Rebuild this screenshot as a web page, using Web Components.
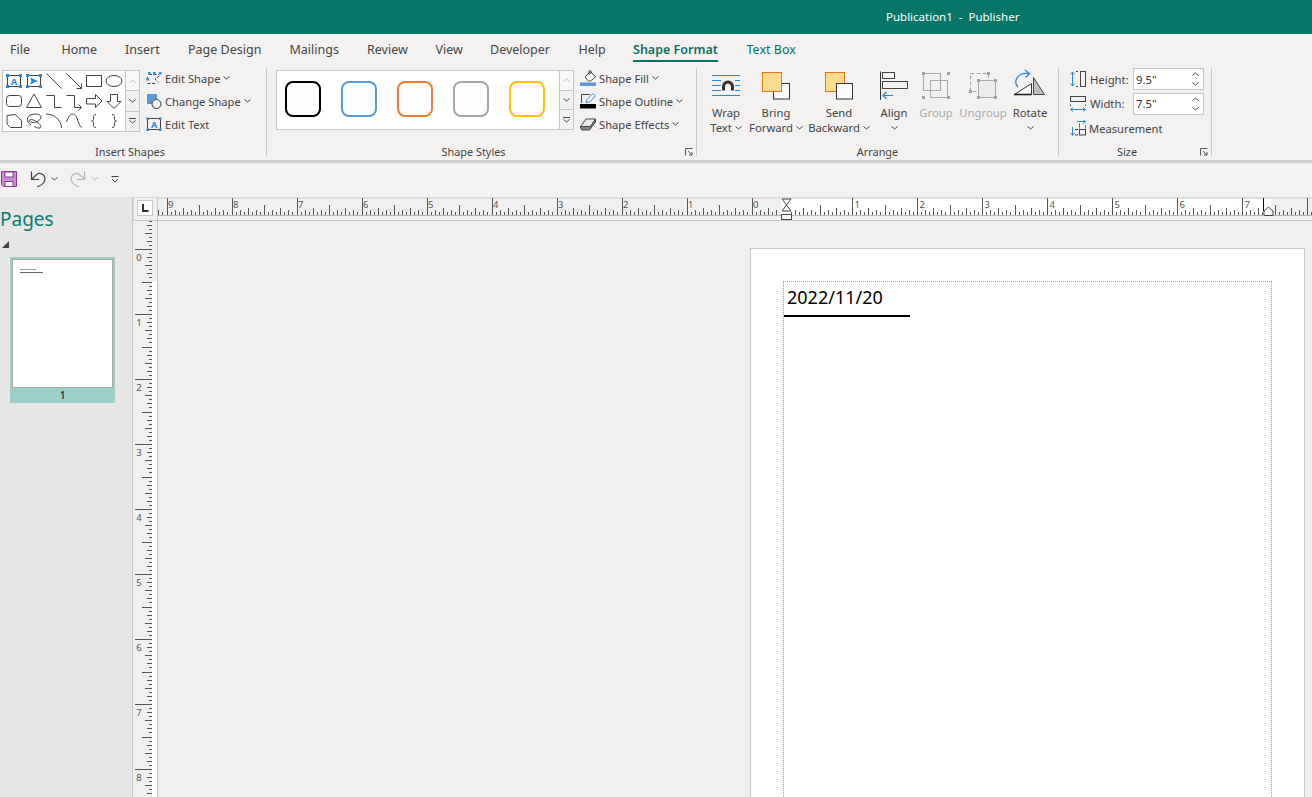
<!DOCTYPE html>
<html>
<head>
<meta charset="utf-8">
<title>Publication1 - Publisher</title>
<style>
  html, body { margin: 0; height: 100%; overflow: hidden; background: #f3f2f1; }
  body { font-family: "Noto Sans", "Open Sans", sans-serif; font-size: 11.3px; color: #444; display: flex; flex-direction: column; }
  .col { display: flex; flex-direction: column; }
</style>
</head>
<body>
<pub-titlebar>Publication1  -  Publisher</pub-titlebar>

<pub-tabs>
  <pub-tab style="width:23px">File</pub-tab>
  <pub-tab style="width:35px">Home</pub-tab>
  <pub-tab style="width:34.5px">Insert</pub-tab>
  <pub-tab style="width:73px">Page Design</pub-tab>
  <pub-tab style="width:49px">Mailings</pub-tab>
  <pub-tab style="width:40px">Review</pub-tab>
  <pub-tab style="width:26px">View</pub-tab>
  <pub-tab style="width:60px">Developer</pub-tab>
  <pub-tab style="width:26px">Help</pub-tab>
  <pub-tab style="width:85px" active contextual>Shape Format</pub-tab>
  <pub-tab style="width:49px" contextual>Text Box</pub-tab>
</pub-tabs>

<pub-ribbon>
  <rb-group label="Insert Shapes" style="width:267px;--label-right:6px">
    <rb-gallery style="margin:4px 0 0 2px;height:62px;width:138px">
      <svg width="122" height="60" viewBox="3 71 122 60" fill="none" stroke="#444" stroke-width="1">
        <rect x="7.5" y="75.5" width="13" height="11"/>
        <g fill="#2b88d8" stroke="none"><rect x="6" y="74" width="3" height="3"/><rect x="19" y="74" width="3" height="3"/><rect x="6" y="85" width="3" height="3"/><rect x="19" y="85" width="3" height="3"/></g>
        <text x="14" y="84.5" text-anchor="middle" font-family="Noto Sans" font-weight="700" font-size="9" fill="#2b88d8" stroke="none">A</text>
        <rect x="27.5" y="75.5" width="13" height="11"/>
        <g fill="#2b88d8" stroke="none"><rect x="26" y="74" width="3" height="3"/><rect x="39" y="74" width="3" height="3"/><rect x="26" y="85" width="3" height="3"/><rect x="39" y="85" width="3" height="3"/></g>
        <path d="M30 77.5 L38 81 L30 84.5 L31.5 81 Z" fill="#2b88d8" stroke="none"/>
        <path d="M46.5 73.5 L61.5 88.5"/>
        <path d="M66.5 73.5 L81.5 88.5 M81.5 83.5 V88.5 H76.5"/>
        <rect x="86.5" y="75.5" width="15" height="11"/>
        <ellipse cx="114" cy="81" rx="8" ry="5.5"/>
        <rect x="6.5" y="95.5" width="15" height="11" rx="3"/>
        <path d="M34 94 L41.5 107.5 H26.5 Z"/>
        <path d="M46.5 95.5 H54.5 V107.5 H61.5"/>
        <path d="M66.5 95.5 H74.5 V107.5 H81.5 M78.5 104.5 L81.5 107.5 L78.5 110.5"/>
        <path d="M86.5 98.5 H95.5 V94.5 L102 101 L95.5 107.5 V104 H86.5 Z"/>
        <path d="M110.5 94.5 H117.5 V101.5 H121 L114 108.5 L107 101.5 H110.5 Z"/>
        <path d="M7 115.5 L15 114.5 L21.5 120.5 V127.5 H10.5 L7 124 Z"/>
        <path d="M31 125 C26 122 26 116 32 114.5 C37 113 42 115 41 118 C39 122 32 124 29 121 C29 119 33 119 37 122 C40 124 42 127 40 128 C37 129 36 126 34 127"/>
        <path d="M46 114 C54 114 61.5 120 61.5 128"/>
        <path d="M66.5 122 C70 111 75 113 77 118 C79 124 80 127 82 127.5"/>
        <path d="M96 114.5 C93.5 114.5 93.5 116 93.5 118 V119.5 C93.5 120.5 92.5 121 91.5 121 C92.5 121 93.5 121.5 93.5 122.5 V124 C93.5 126 93.5 127.5 96 127.5"/>
        <path d="M112 114.5 C114.5 114.5 114.5 116 114.5 118 V119.5 C114.5 120.5 115.5 121 116.5 121 C115.5 121 114.5 121.5 114.5 122.5 V124 C114.5 126 114.5 127.5 112 127.5"/>
      </svg>
    </rb-gallery>
    <div class="col" style="margin:.5px 0 0 6px">
      <rb-small menu label="Edit Shape">
        <svg slot="icon" width="16" height="16" viewBox="146 70 16 16" fill="none" stroke="#444">
          <path d="M149 74.5 H159 M159.5 76 L155 79 L158.5 82 M147.5 77 V81 M147.5 83.5 H155" stroke-dasharray="3 1.5"/>
          <g fill="#2b88d8" stroke="none"><rect x="148" y="72" width="2.5" height="2.5"/><rect x="153" y="72" width="2.5" height="2.5"/><rect x="159" y="72" width="2.5" height="2.5"/><rect x="146.5" y="78" width="2.5" height="2.5"/></g>
        </svg>
      </rb-small>
      <rb-small menu label="Change Shape">
        <svg slot="icon" width="16" height="16" viewBox="146 93 16 16">
          <path d="M147 94 H157 V99 A5 5 0 0 0 152 104 H147 Z" fill="#5b9bd5"/>
          <circle cx="156.5" cy="104" r="4.5" fill="#f3f2f1" stroke="#333"/>
        </svg>
      </rb-small>
      <rb-small label="Edit Text">
        <svg slot="icon" width="16" height="16" viewBox="146 116 16 16" fill="none" stroke="#444">
          <rect x="147.5" y="118.5" width="13" height="11"/>
          <g fill="#2b88d8" stroke="none"><rect x="146.5" y="117.5" width="2.5" height="2.5"/><rect x="159" y="117.5" width="2.5" height="2.5"/><rect x="146.5" y="128.5" width="2.5" height="2.5"/><rect x="159" y="128.5" width="2.5" height="2.5"/></g>
          <text x="154" y="127.5" text-anchor="middle" font-family="Noto Sans" font-weight="700" font-size="9" fill="#2b88d8" stroke="none">A</text>
        </svg>
      </rb-small>
    </div>
  </rb-group>

  <rb-group label="Shape Styles" launcher style="width:430px">
    <rb-gallery style="margin:4px 0 0 9px;height:60px;width:298px">
      <div style="display:flex;gap:20px;padding:10px 0 0 8px">
        <style-swatch style="--c:#000"></style-swatch>
        <style-swatch style="--c:#5b9bd5"></style-swatch>
        <style-swatch style="--c:#ed7d31"></style-swatch>
        <style-swatch style="--c:#a5a5a5"></style-swatch>
        <style-swatch style="--c:#ffc000"></style-swatch>
      </div>
    </rb-gallery>
    <div class="col" style="margin:.5px 0 0 6px">
      <rb-small menu label="Shape Fill">
        <svg slot="icon" width="16" height="16" viewBox="580 70 16 16">
          <path d="M585 77 L590.5 71.5 L595.5 77 L590.5 81 H588.5 Z" fill="#fff" stroke="#444"/>
          <path d="M589 75 V71.5 A1 1 0 0 1 591 71.5 V74" fill="none" stroke="#444"/>
          <rect x="580" y="82.5" width="16" height="3.5" fill="#5b9bd5"/>
        </svg>
      </rb-small>
      <rb-small menu label="Shape Outline">
        <svg slot="icon" width="16" height="16" viewBox="580 93 16 16">
          <path d="M590 94.5 H581.5 V103" fill="none" stroke="#444"/>
          <path d="M586 102.5 L587 99.5 L593 93.5 L595.5 96 L589.5 102 Z" fill="#fff" stroke="#2b88d8"/>
          <rect x="580" y="104" width="16" height="4.5" fill="#000"/>
        </svg>
      </rb-small>
      <rb-small menu label="Shape Effects">
        <svg slot="icon" width="16" height="16" viewBox="580 116 16 16">
          <path d="M580.5 126.5 L586 119 H595.5 L590.5 126.5 Z" fill="#e8e8e8" stroke="#444"/>
          <path d="M580.5 126.5 H590.5 L595.5 119 V122 L589.5 130 H582 L580.5 128 Z" fill="#8a8a8a" stroke="#444"/>
        </svg>
      </rb-small>
    </div>
  </rb-group>

  <rb-group label="Arrange" style="width:362px">
    <div style="display:flex;margin-left:10px">
      <rb-large line1="Wrap" line2="Text" menu style="width:38px">
        <svg slot="icon" width="40" height="38" viewBox="706 68 40 38" fill="none">
          <path d="M712 75.5 H740 M712 80.5 H721 M735 80.5 H740 M712 85.5 H721 M735 85.5 H740 M712 90.5 H721 M735 90.5 H740 M712 95.5 H740" stroke="#2b88d8"/>
          <path d="M723.5 90.5 V86.5 A4.5 4.5 0 0 1 732.5 86.5 V90.5" stroke="#333" stroke-width="3"/>
        </svg>
      </rb-large>
      <rb-large line1="Bring" line2="Forward" menu style="width:62px">
        <svg slot="icon" width="40" height="38" viewBox="756 68 40 38">
          <rect x="773.5" y="83.5" width="16" height="15.5" fill="#fafafa" stroke="#333"/>
          <rect x="762.5" y="72.5" width="19" height="19" fill="#fbdc8f" stroke="#e07a10"/>
        </svg>
      </rb-large>
      <rb-large line1="Send" line2="Backward" menu style="width:64px">
        <svg slot="icon" width="40" height="38" viewBox="819 68 40 38">
          <rect x="825.5" y="72.5" width="19" height="19" fill="#fbdc8f" stroke="#e07a10"/>
          <rect x="836.5" y="83.5" width="16" height="15.5" fill="#fafafa" stroke="#333"/>
        </svg>
      </rb-large>
      <rb-large line1="Align" line2="" menu style="width:46px">
        <svg slot="icon" width="40" height="38" viewBox="874 68 40 38" fill="none">
          <path d="M880.5 71.5 V100" stroke="#333"/>
          <rect x="882.5" y="72.5" width="12" height="6" stroke="#444"/>
          <rect x="882.5" y="81.5" width="25" height="7" stroke="#444"/>
          <path d="M893 95.5 H883 M886.5 92 L883 95.5 L886.5 99" stroke="#2b88d8" stroke-width="1.2"/>
        </svg>
      </rb-large>
      <rb-large disabled line1="Group" style="width:38px">
        <svg slot="icon" width="40" height="38" viewBox="916 68 40 38" fill="none" stroke="#a8a8a8">
          <rect x="923.5" y="73.5" width="17" height="17"/>
          <rect x="930.5" y="80.5" width="17" height="17"/>
          <g fill="#a0a0a0" stroke="none"><rect x="922" y="72" width="3" height="3"/><rect x="947" y="72" width="3" height="3"/><rect x="922" y="96" width="3" height="3"/><rect x="947" y="96" width="3" height="3"/></g>
        </svg>
      </rb-large>
      <rb-large disabled line1="Ungroup" style="width:56px">
        <svg slot="icon" width="40" height="38" viewBox="963 68 40 38" fill="none" stroke="#a8a8a8">
          <rect x="970.5" y="73.5" width="18" height="18" stroke-dasharray="4 2"/>
          <rect x="978.5" y="80.5" width="17" height="17" fill="#ededed"/>
          <g fill="#a0a0a0" stroke="none"><rect x="969" y="90" width="3" height="3"/><rect x="987" y="72" width="3" height="3"/><rect x="977" y="79" width="3" height="3"/><rect x="994" y="79" width="3" height="3"/><rect x="977" y="96" width="3" height="3"/><rect x="994" y="96" width="3" height="3"/></g>
        </svg>
      </rb-large>
      <rb-large line1="Rotate" line2="" menu style="width:38px">
        <svg slot="icon" width="40" height="38" viewBox="1010 68 40 38" fill="none">
          <path d="M1014.5 94.5 L1031.5 83.5 V94.5 Z" fill="#fff" stroke="#333"/>
          <path d="M1014 94.5 H1031.5" stroke="#222" stroke-width="1.6"/>
          <path d="M1033.5 77.5 L1044.5 94.5 H1033.5 Z" fill="#bfbfbf" stroke="#444"/>
          <path d="M1018 87 C1013 82 1017 72 1029 73.5 M1025 70 L1029.5 73.5 L1025.5 77.5" stroke="#2b88d8" stroke-width="1.3"/>
        </svg>
      </rb-large>
    </div>
  </rb-group>

  <rb-group label="Size" launcher style="width:153px">
    <div class="col" style="margin:2px 0 0 11px">
      <rb-spin label="Height:" value='9.5"'>
        <svg slot="icon" width="16" height="16" viewBox="1070 71 16 16" fill="none">
          <path d="M1072.5 72 V86 M1070.5 74.5 L1072.5 72 L1074.5 74.5 M1070.5 83.5 L1072.5 86 L1074.5 83.5" stroke="#2b88d8"/>
          <rect x="1080.5" y="71.5" width="5" height="15" stroke="#444"/>
          <path d="M1076 71.5 H1078 M1076 86.5 H1078" stroke="#444"/>
        </svg>
      </rb-spin>
      <rb-spin label="Width:" value='7.5"' style="margin-top:2.5px">
        <svg slot="icon" width="16" height="16" viewBox="1070 95 16 16" fill="none">
          <rect x="1070.5" y="95.5" width="15" height="5" stroke="#444"/>
          <path d="M1070.5 103.5 V105 M1085.5 103.5 V105" stroke="#444"/>
          <path d="M1070.5 108.5 H1085.5 M1073 106.5 L1070.5 108.5 L1073 110.5 M1083 106.5 L1085.5 108.5 L1083 110.5" stroke="#2b88d8"/>
        </svg>
      </rb-spin>
      <rb-small label="Measurement" style="margin-top:2px">
        <svg slot="icon" width="16" height="16" viewBox="1070 120 16 16" fill="none">
          <path d="M1079.5 125.5 V123 M1085.5 125.5 V129.5 H1079.5 V126" stroke="#444" stroke-dasharray="2 1"/>
          <rect x="1079.5" y="129.5" width="6" height="5.5" stroke="#444"/>
          <path d="M1077 121.5 H1085 M1083 119.5 L1085.5 121.5 L1083 123.5 M1072.5 127 V135 M1070.5 133 L1072.5 135.5 L1074.5 133" stroke="#2b88d8"/>
          <path d="M1075 129.5 H1078 M1075 135 H1078" stroke="#444"/>
        </svg>
      </rb-small>
    </div>
  </rb-group>
</pub-ribbon>

<pub-qat></pub-qat>

<pub-workspace>
  <pub-pages slot="pane"></pub-pages>
  <ruler-corner slot="corner"></ruler-corner>
  <ruler-h slot="hruler"></ruler-h>
  <ruler-v slot="vruler"></ruler-v>
  <pub-canvas slot="canvas">
    <pub-page>
      <pub-textbox>2022/11/20</pub-textbox>
    </pub-page>
  </pub-canvas>
</pub-workspace>

<script>
const chevron = (color = '#444') => `<svg width="7" height="4" viewBox="0 0 7 4" fill="none" stroke="${color}"><path d="M.5 .5 L3.5 3 L6.5 .5"/></svg>`;
const chevronUp = (color = '#444') => `<svg width="7" height="4" viewBox="0 0 7 4" fill="none" stroke="${color}"><path d="M.5 3.5 L3.5 1 L6.5 3.5"/></svg>`;

class PubTitlebar extends HTMLElement {
  constructor() {
    super();
    this.attachShadow({ mode: 'open' });
    this.shadowRoot.innerHTML = `<style>
      :host { display: block; flex: none; height: 34px; background: #077568; color: #fff; font-size: 11.5px; line-height: 33px; padding-left: 886px; white-space: pre; }
    </style><slot></slot>`;
  }
}

class PubTabs extends HTMLElement {
  constructor() {
    super();
    this.attachShadow({ mode: 'open' });
    this.shadowRoot.innerHTML = `<style>
      :host { display: flex; flex: none; height: 32px; gap: 28.5px; padding-left: 10px; }
    </style><slot></slot>`;
  }
}

class PubTab extends HTMLElement {
  constructor() {
    super();
    this.attachShadow({ mode: 'open' });
    this.shadowRoot.innerHTML = `<style>
      :host { display: block; font-size: 12.5px; line-height: 16px; padding-top: 8px; color: #444; white-space: nowrap; }
      :host([contextual]) { color: #0a7163; }
      :host([active]) { font-weight: 600; }
      .bar { height: 2px; margin-top: 2px; }
      :host([active]) .bar { background: #0a7163; }
    </style><slot></slot><div class="bar"></div>`;
  }
}

class PubRibbon extends HTMLElement {
  constructor() {
    super();
    this.attachShadow({ mode: 'open' });
    this.shadowRoot.innerHTML = `<style>
      :host { display: flex; flex: none; height: 94px; border-bottom: 3px solid #d2d0ce; }
    </style><slot></slot>`;
  }
}

class RbGroup extends HTMLElement {
  constructor() {
    super();
    this.attachShadow({ mode: 'open' });
    const launcher = this.hasAttribute('launcher') ? `<svg class="launcher" width="8" height="8" viewBox="0 0 8 8" fill="none" stroke="#555"><path d="M.5 7.5 V.5 H7.5 M3 3 L7 7 M7 4 V7 H4"/></svg>` : '';
    this.shadowRoot.innerHTML = `<style>
      :host { display: flex; flex: none; box-sizing: border-box; height: 94px; }
      .inner { flex: 1; min-width: 0; display: flex; flex-direction: column; }
      .body { height: 78px; display: flex; align-items: flex-start; }
      .foot { display: flex; height: 16px; font-size: 10.9px; line-height: 16px; padding-right: var(--label-right, 0); }
      .name { flex: 1; text-align: center; }
      .launcher { margin: 4px 3px 0 5px; }
      .sep { width: 1px; background: #c8c6c4; margin: 2px 0 4px; }
    </style>
    <div class="inner">
      <div class="body"><slot></slot></div>
      <div class="foot"><div class="name">${this.getAttribute('label')}</div>${launcher}</div>
    </div>
    <div class="sep"></div>`;
  }
}

class RbGallery extends HTMLElement {
  constructor() {
    super();
    this.attachShadow({ mode: 'open' });
    this.shadowRoot.innerHTML = `<style>
      :host { display: flex; flex: none; box-sizing: border-box; }
      .items { flex: 1; background: #fff; border: 1px solid #c8c6c4; overflow: hidden; line-height: 0; }
      .scroll { width: 14px; display: flex; flex-direction: column; }
      .scroll div { flex: 1; border: 1px solid #c8c6c4; border-left: none; display: flex; flex-direction: column; align-items: center; justify-content: center; gap: 1px; }
      .scroll div + div { border-top: none; }
      .scroll i { display: block; width: 7px; height: 1px; background: #444; }
      .scroll div:first-child { background: #f8f8f8; }
    </style>
    <div class="items"><slot></slot></div>
    <div class="scroll">
      <div>${chevronUp('#bbb')}</div>
      <div>${chevron()}</div>
      <div><i></i>${chevron()}</div>
    </div>`;
  }
}

class StyleSwatch extends HTMLElement {
  constructor() {
    super();
    this.attachShadow({ mode: 'open' });
    this.shadowRoot.innerHTML = `<style>
      :host { display: block; box-sizing: border-box; width: 36px; height: 36px; border: 2.5px solid var(--c); border-radius: 8px; background: #fdfdfd; }
    </style>`;
  }
}

class RbSmall extends HTMLElement {
  constructor() {
    super();
    this.attachShadow({ mode: 'open' });
    const arrow = this.hasAttribute('menu') ? `<span class="arrow">${chevron()}</span>` : '';
    this.shadowRoot.innerHTML = `<style>
      :host { display: flex; align-items: center; height: 23px; gap: 3px; white-space: nowrap; }
      .icon { width: 16px; height: 16px; flex: none; line-height: 0; }
      .arrow { margin: 0 0 1px 0; line-height: 0; }
      .text { font-size: 11.2px; }
    </style>
    <div class="icon"><slot name="icon"></slot></div>
    <span class="text">${this.getAttribute('label')}</span>${arrow}`;
  }
}

class RbLarge extends HTMLElement {
  constructor() {
    super();
    this.attachShadow({ mode: 'open' });
    const arrow = this.hasAttribute('menu') ? chevron() : '';
    const line2 = this.getAttribute('line2');
    this.shadowRoot.innerHTML = `<style>
      :host { display: flex; flex: none; flex-direction: column; align-items: center; white-space: nowrap; margin-top: 2px; }
      :host([disabled]) { color: #a8a8a8; }
      .icon { height: 37px; line-height: 0; }
      .line { height: 15px; line-height: 15px; font-size: 11.3px; display: flex; align-items: center; gap: 3px; }
    </style>
    <div class="icon"><slot name="icon"></slot></div>
    <div class="line">${this.getAttribute('line1')}</div>
    ${line2 !== null ? `<div class="line">${line2}${arrow}</div>` : ''}`;
  }
}

class RbSpin extends HTMLElement {
  constructor() {
    super();
    this.attachShadow({ mode: 'open' });
    this.shadowRoot.innerHTML = `<style>
      :host { display: flex; align-items: center; height: 22px; white-space: nowrap; }
      .icon { width: 16px; height: 16px; flex: none; line-height: 0; margin-right: 4px; }
      .label { width: 43px; font-size: 11.3px; }
      .box { box-sizing: border-box; width: 71px; height: 22px; background: #fff; border: 1px solid #c8c6c4; display: flex; align-items: center; justify-content: space-between; padding: 0 4px 0 2px; font-size: 11.3px; color: #333; }
      .arrows { display: flex; flex-direction: column; gap: 6px; line-height: 0; }
    </style>
    <div class="icon"><slot name="icon"></slot></div>
    <div class="label">${this.getAttribute('label')}</div>
    <div class="box"><span>${this.getAttribute('value')}</span><div class="arrows">${chevronUp()}${chevron()}</div></div>`;
  }
}

class PubQat extends HTMLElement {
  constructor() {
    super();
    this.attachShadow({ mode: 'open' });
    this.shadowRoot.innerHTML = `<style>
      :host { display: flex; flex: none; align-items: center; height: 32px; padding: 0 0 2px 1px; line-height: 0; }
      svg { flex: none; }
    </style>
    <svg width="16" height="16" viewBox="1 171.5 16 16">
      <path d="M1.5 172 H16.5 V187 H3.5 L1.5 185 Z" fill="#c98fd0" stroke="#8a3a96"/>
      <rect x="5" y="172.5" width="8" height="5" fill="#fff" stroke="#8a3a96"/>
      <rect x="5" y="182" width="8" height="5" fill="#fff" stroke="#8a3a96"/>
    </svg>
    <svg style="margin-left:13px" width="16" height="16" viewBox="30 171.5 16 16" fill="none" stroke="#444" stroke-width="1.2">
      <path d="M31.5 172 V180 H39 M31.5 180 L36 175.5 C40 172 45 175 45 179.5 C45 183 41 186 37 187.5"/>
    </svg>
    <span style="margin-left:5px">${chevron()}</span>
    <svg style="margin-left:12px" width="16" height="16" viewBox="70 171.5 16 16" fill="none" stroke="#b5b5b5" stroke-width="1.2">
      <path d="M84.5 172 V180 H77 M84.5 180 L80 175.5 C76 172 71 175 71 179.5 C71 183 75 186 79 187.5"/>
    </svg>
    <span style="margin-left:4.5px">${chevron('#b5b5b5')}</span>
    <svg style="margin-left:13.5px" width="8" height="8" viewBox="0 0 8 8" fill="none" stroke="#444"><path d="M.5 1.5 H7.5 M1 4 L4 7 L7 4"/></svg>`;
  }
}

class PubWorkspace extends HTMLElement {
  constructor() {
    super();
    this.attachShadow({ mode: 'open' });
    this.shadowRoot.innerHTML = `<style>
      :host { display: grid; flex: 1; min-height: 0; grid-template-columns: 133px 25px 1fr; grid-template-rows: 24px 1fr; background: #f0f0f0; overflow: hidden; }
      .pane { grid-row: 1 / 3; min-height: 0; }
      .hr, .canvas { min-width: 0; overflow: hidden; }
      .vr, .canvas { min-height: 0; overflow: hidden; }
    </style>
    <div class="pane"><slot name="pane"></slot></div>
    <div><slot name="corner"></slot></div>
    <div class="hr"><slot name="hruler"></slot></div>
    <div class="vr"><slot name="vruler"></slot></div>
    <div class="canvas"><slot name="canvas"></slot></div>`;
  }
}

class PubPages extends HTMLElement {
  constructor() {
    super();
    this.attachShadow({ mode: 'open' });
    this.shadowRoot.innerHTML = `<style>
      :host { display: block; box-sizing: border-box; height: 100%; background: #e6e6e6; border-right: 1px solid #c6c6c6; }
      h2 { margin: 0; font-weight: 400; font-size: 19px; line-height: 26px; color: #0b7a70; padding: 9px 0 0 0; }
      .tri { display: block; margin: 9px 0 0 2px; }
      .thumb { width: 105px; height: 146px; margin: 9px 0 0 10px; background: #9ccfc8; box-sizing: border-box; padding: 2px 2px 0 2px; }
      .sheet { box-sizing: border-box; height: 129px; background: #fff; border: 1px solid #a8a8a8; padding: 9px 0 0 7px; }
      .sheet i { display: block; height: 1px; }
      .num { text-align: center; font-size: 10px; line-height: 15px; font-weight: 600; color: #333; }
    </style>
    <h2>Pages</h2>
    <svg class="tri" width="7" height="7" viewBox="0 0 7 7"><path d="M7 0 V7 H0 Z" fill="#444"/></svg>
    <div class="thumb">
      <div class="sheet">
        <i style="width:16px;background:#999"></i>
        <i style="width:23px;background:#666;margin-top:2px"></i>
      </div>
      <div class="num">1</div>
    </div>`;
  }
}

class RulerCorner extends HTMLElement {
  constructor() {
    super();
    this.attachShadow({ mode: 'open' });
    this.shadowRoot.innerHTML = `<style>
      :host { display: block; box-sizing: border-box; height: 24px; padding: 2px 3px 0 3px; border-right: 1px solid #c6c6c6; border-bottom: 1px solid #c6c6c6; border-top: 1px solid #d8d8d8; border-left: 1px solid #d8d8d8; }
      .box { box-sizing: border-box; width: 16px; height: 16px; background: #fff; border: 1px solid #c6c6c6; display: flex; align-items: center; justify-content: center; }
    </style>
    <div class="box"><svg width="7" height="8" viewBox="0 0 7 8"><path d="M1 0 V7 H6.5" fill="none" stroke="#333" stroke-width="2"/></svg></div>`;
  }
}

// ticks every 1/16 inch, 65px to the unit
function tickLength(i) {
  if (i % 16 === 0) return 17;
  if (i % 8 === 0) return 10;
  if (i % 4 === 0) return 7;
  if (i % 2 === 0) return 5;
  return 3;
}

class RulerH extends HTMLElement {
  constructor() {
    super();
    this.attachShadow({ mode: 'open' });
    let ticks = '';
    let labels = '';
    const base = 215;
    const add = (x, i) => {
      const px = Math.round(x) + .5;
      ticks += `M${px} ${base} V${base - tickLength(i)} `;
    };
    for (let i = 0; i <= 150; i++) {
      const x = 751.5 - i * 65 / 16;
      if (x >= 158) add(x, i);
    }
    for (let i = 1; i < 7; i++) add(751.5 + i * 65 / 16, i);
    for (let i = 1; i <= 130; i++) {
      const x = 787 + i * 65 / 16;
      if (x < 1312) add(x, i);
    }
    for (let n = 0; n <= 9; n++) labels += `<text x="${753 - n * 65}" y="208">${n}</text>`;
    for (let n = 1; n <= 7; n++) labels += `<text x="${789.5 + n * 65}" y="208">${n}</text>`;
    this.shadowRoot.innerHTML = `<style>
      :host { display: block; height: 24px; overflow: hidden; line-height: 0; }
      text { font-family: "Noto Sans", sans-serif; font-size: 9.5px; fill: #555; }
    </style>
    <svg width="1154" height="24" viewBox="158 197 1154 24">
      <rect x="158" y="197" width="1154" height="24" fill="#f0f0f0"/>
      <rect x="158" y="197" width="1154" height="1.5" fill="#d8d8d8"/>
      <rect x="781" y="199" width="490" height="16" fill="#fff"/>
      <path d="${ticks}" stroke="#555" fill="none"/>
      <rect x="158" y="215" width="1154" height="1" fill="#b8b8b8"/>
      <rect x="158" y="220" width="1154" height="1" fill="#c6c6c6"/>
      ${labels}
      <path d="M782 199 H791 L786.5 205 L791 211 H782 L786.5 205 Z" fill="#fff" stroke="#444"/>
      <rect x="781.5" y="214.5" width="10" height="5" fill="#fff" stroke="#444"/>
      <path d="M1263.5 198 V211" stroke="#111"/>
      <path d="M1264 215.5 V211 L1268.5 207 L1273 211 V215.5 Z" fill="#fff" stroke="#444"/>
    </svg>`;
  }
}

class RulerV extends HTMLElement {
  constructor() {
    super();
    this.attachShadow({ mode: 'open' });
    let ticks = '';
    let labels = '';
    for (let i = -7; i <= 144; i++) {
      const y = Math.round(249 + i * 65 / 16) + .5;
      ticks += `M152 ${y} H${152 - tickLength(((i % 16) + 16) % 16)} `;
    }
    for (let n = 0; n <= 8; n++) labels += `<text x="139" y="${261 + n * 65}" text-anchor="middle">${n}</text>`;
    this.shadowRoot.innerHTML = `<style>
      :host { display: block; height: 100%; overflow: hidden; line-height: 0; }
      text { font-family: "Noto Sans", sans-serif; font-size: 9.5px; fill: #555; }
    </style>
    <svg width="25" height="577" viewBox="133 221 25 577">
      <rect x="133" y="221" width="25" height="577" fill="#f0f0f0"/>
      <rect x="152" y="281" width="5" height="517" fill="#fff"/>
      <rect x="157" y="221" width="1" height="577" fill="#c6c6c6"/>
      <path d="${ticks}" stroke="#555" fill="none"/>
      ${labels}
    </svg>`;
  }
}

class PubCanvas extends HTMLElement {
  constructor() {
    super();
    this.attachShadow({ mode: 'open' });
    this.shadowRoot.innerHTML = `<style>
      :host { display: block; box-sizing: border-box; height: 100%; padding: 27px 0 0 592px; background: #f0f0f0; overflow: hidden; }
    </style><slot></slot>`;
  }
}

class PubPage extends HTMLElement {
  constructor() {
    super();
    this.attachShadow({ mode: 'open' });
    this.shadowRoot.innerHTML = `<style>
      :host { display: block; box-sizing: border-box; width: 555px; height: 900px; background: #fff; border: 1px solid #c6c6c6; padding: 32px 0 0 32px; }
      .margins { box-sizing: border-box; width: 489px; height: 800px; border: 1px dotted #7aa9d6; }
    </style><div class="margins"><slot></slot></div>`;
  }
}

class PubTextbox extends HTMLElement {
  constructor() {
    super();
    this.attachShadow({ mode: 'open' });
    this.shadowRoot.innerHTML = `<style>
      :host { display: block; box-sizing: border-box; width: 126px; height: 35px; border-bottom: 2px solid #000; padding: 2px 0 0 3px; color: #000; font-size: 18px; line-height: 26px; white-space: nowrap; }
    </style><slot></slot>`;
  }
}

customElements.define('pub-titlebar', PubTitlebar);
customElements.define('pub-tabs', PubTabs);
customElements.define('pub-tab', PubTab);
customElements.define('pub-ribbon', PubRibbon);
customElements.define('rb-group', RbGroup);
customElements.define('rb-gallery', RbGallery);
customElements.define('style-swatch', StyleSwatch);
customElements.define('rb-small', RbSmall);
customElements.define('rb-large', RbLarge);
customElements.define('rb-spin', RbSpin);
customElements.define('pub-qat', PubQat);
customElements.define('pub-workspace', PubWorkspace);
customElements.define('pub-pages', PubPages);
customElements.define('ruler-corner', RulerCorner);
customElements.define('ruler-h', RulerH);
customElements.define('ruler-v', RulerV);
customElements.define('pub-canvas', PubCanvas);
customElements.define('pub-page', PubPage);
customElements.define('pub-textbox', PubTextbox);
</script>
</body>
</html>
